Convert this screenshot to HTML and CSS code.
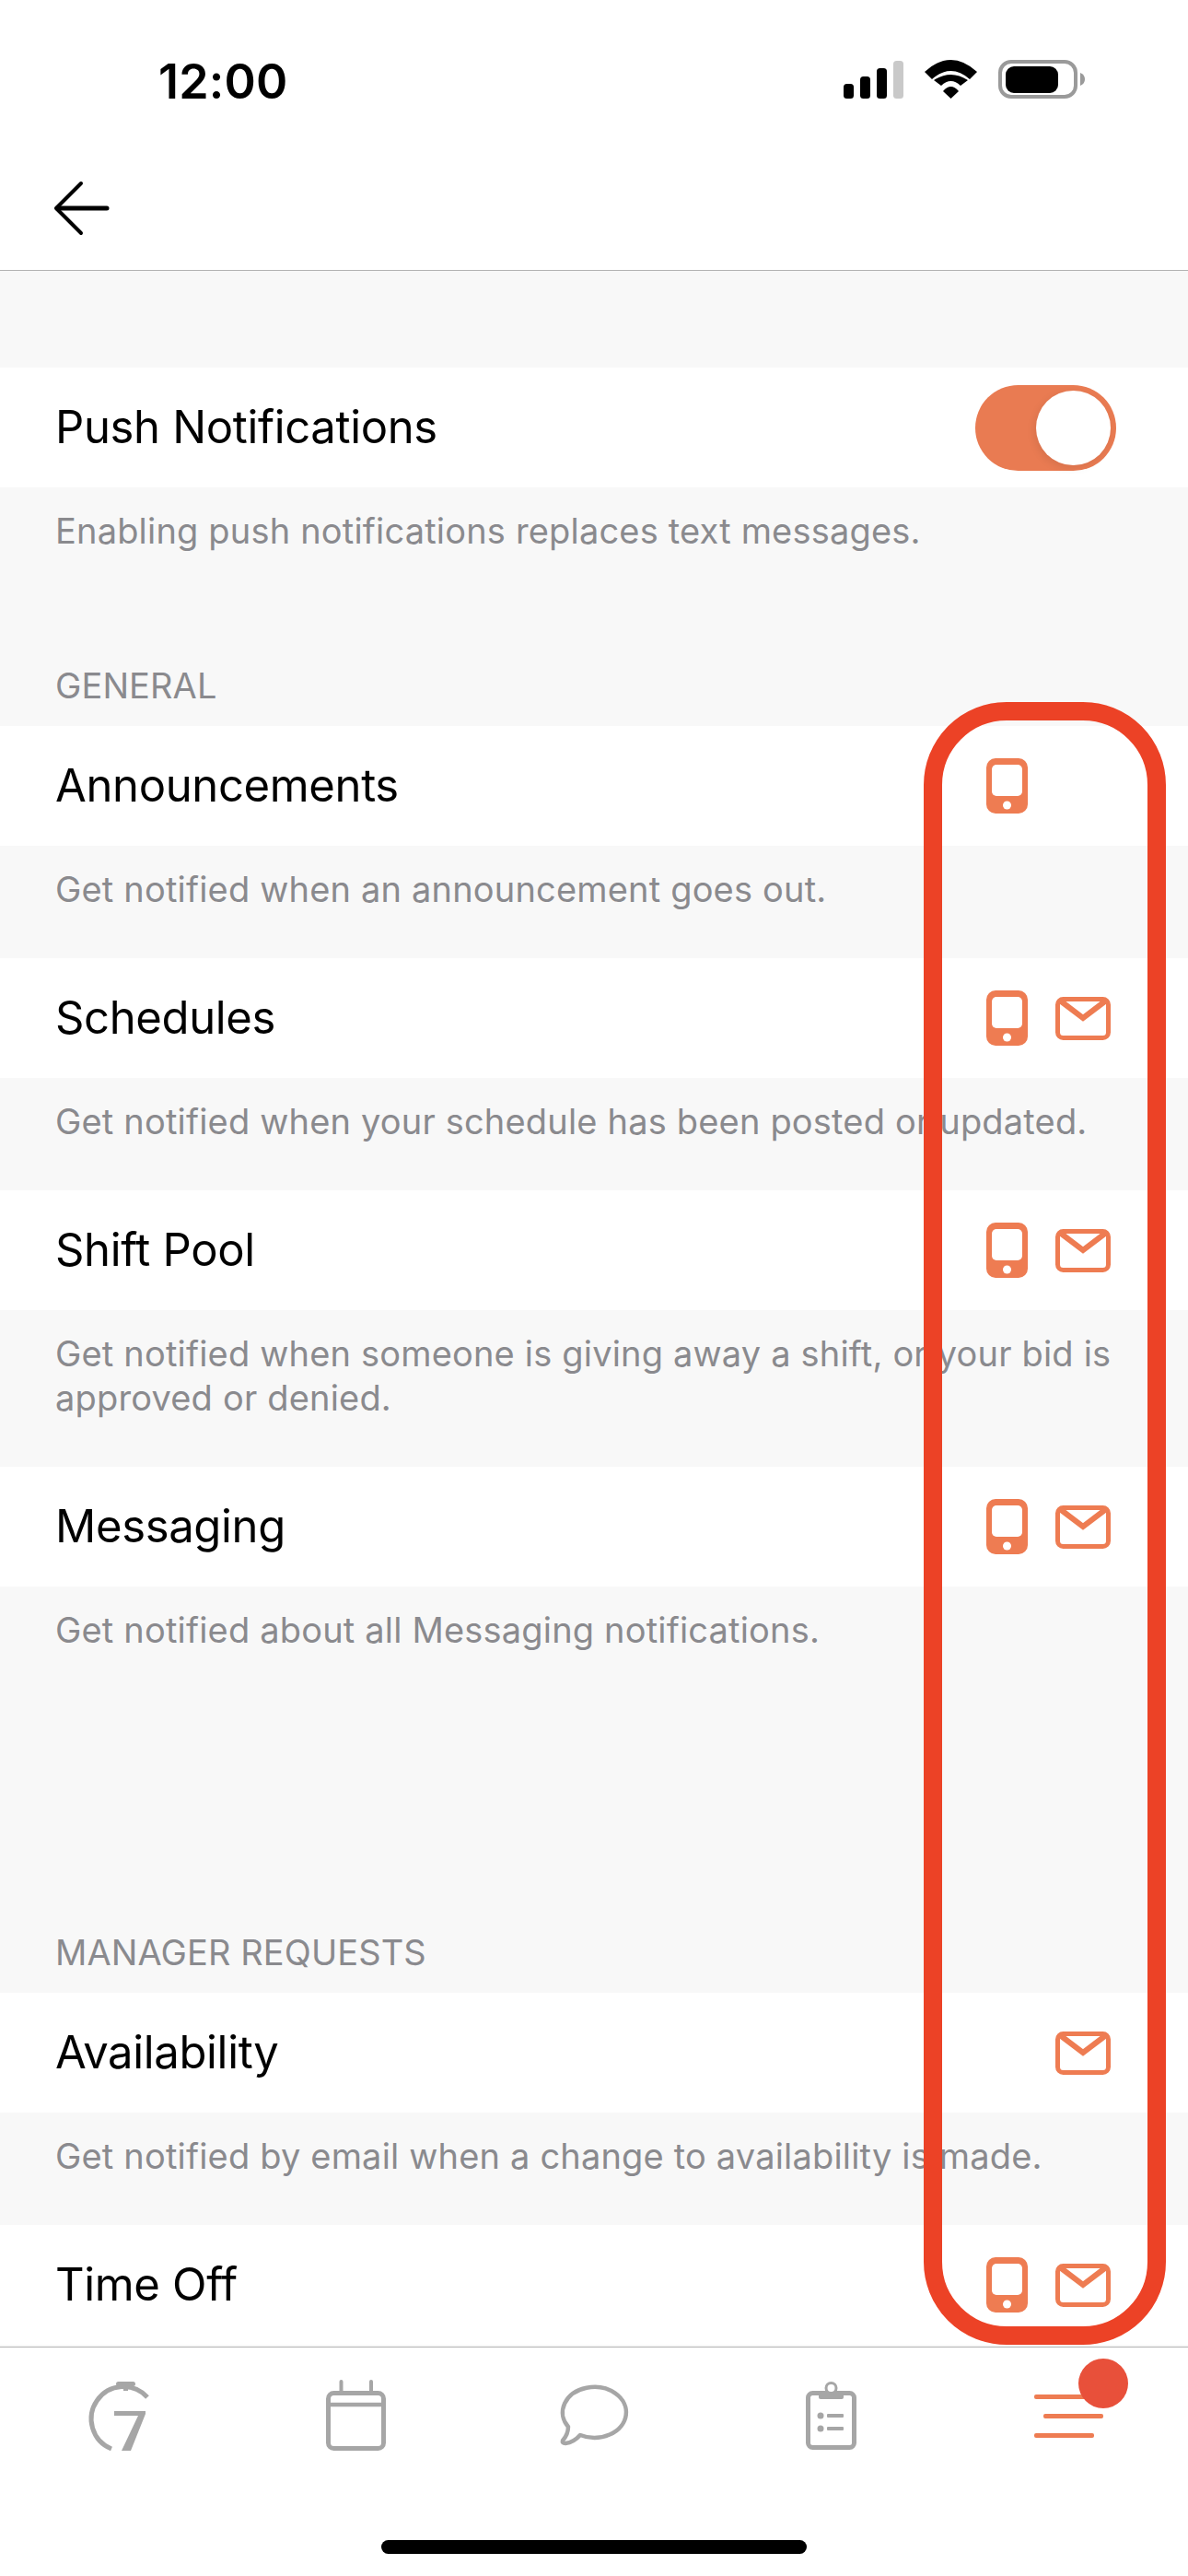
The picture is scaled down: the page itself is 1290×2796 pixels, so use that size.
FILE: index.html
```html
<!DOCTYPE html>
<html lang="en">
<head>
  <meta charset="UTF-8">
  <meta name="viewport" content="width=device-width, initial-scale=1.0">
  <title>Notification Settings</title>
  <link rel="stylesheet" href="styles.css">
</head>

<body>
  <svg class="defs" width="0" height="0">
    <symbol id="phone" viewBox="0 0 45 60">
      <rect width="45" height="60" rx="10" fill="#ee7c52"/>
      <rect x="6" y="7" width="33" height="34" rx="5" fill="#fff"/>
      <circle cx="22.5" cy="51" r="4.5" fill="#fff"/>
    </symbol>
    <symbol id="mail" viewBox="0 0 60 47">
      <rect x="2.5" y="2.5" width="55" height="42" rx="6" fill="none" stroke="#ee7c52" stroke-width="5"/>
      <path d="M5 4 L30 23 L55 4" fill="none" stroke="#ee7c52" stroke-width="6"/>
    </symbol>
  </svg>

  <div class="screen">
    <div class="header">
      <div class="status">
        <span class="time">12:00</span>
        <svg class="status-icons" width="262" height="44" viewBox="916 65 262 44">
          <rect x="916" y="91" width="11" height="16" rx="3.5"/>
          <rect x="934" y="83" width="11" height="24" rx="3.5"/>
          <rect x="952" y="74" width="11" height="33" rx="3.5"/>
          <rect x="970" y="66" width="11" height="41" rx="3.5" fill="#c9c9c9"/>
          <path d="M1004 78 Q1032.5 52 1061 78 L1053 86 Q1032.5 68 1012 86 Z"/>
          <path d="M1014 87 Q1032.5 75 1051 87 L1043 93 Q1032.5 83 1022 93 Z"/>
          <path d="M1024 99 Q1032.5 89 1041 99 L1032.5 107 Z"/>
          <rect x="1086" y="67" width="82" height="38" rx="12" fill="none" stroke="#9a9a9a" stroke-width="4"/>
          <rect x="1092" y="72" width="57" height="29" rx="9"/>
          <path d="M1173 79 Q1178 81 1178 86 Q1178 91 1173 93 Z" fill="#9a9a9a"/>
        </svg>
      </div>
      <div class="toolbar">
        <svg width="64" height="64" viewBox="0 0 64 64">
          <path d="M4 32 H58" fill="none" stroke="#000" stroke-width="5" stroke-linecap="round"/>
          <path d="M30 5 L3 32 L30 59" fill="none" stroke="#000" stroke-width="4" stroke-linecap="round" stroke-linejoin="round"/>
        </svg>
      </div>
    </div>

    <div class="content">
      <div class="row">
        <span class="row-title">Push Notifications</span>
        <div class="toggle"><div class="knob"></div></div>
      </div>
      <p class="desc">Enabling push notifications replaces text messages.</p>

      <div class="label">GENERAL</div>
      <div class="row">
        <span class="row-title">Announcements</span>
        <div class="icons">
          <svg class="ic-phone"><use href="#phone"/></svg>
        </div>
      </div>
      <p class="desc">Get notified when an announcement goes out.</p>

      <div class="row">
        <span class="row-title">Schedules</span>
        <div class="icons">
          <svg class="ic-phone"><use href="#phone"/></svg>
          <svg class="ic-mail"><use href="#mail"/></svg>
        </div>
      </div>
      <p class="desc">Get notified when your schedule has been posted or updated.</p>

      <div class="row">
        <span class="row-title">Shift Pool</span>
        <div class="icons">
          <svg class="ic-phone"><use href="#phone"/></svg>
          <svg class="ic-mail"><use href="#mail"/></svg>
        </div>
      </div>
      <p class="desc">Get notified when someone is giving away a shift, or your bid is approved or denied.</p>

      <div class="row">
        <span class="row-title">Messaging</span>
        <div class="icons">
          <svg class="ic-phone"><use href="#phone"/></svg>
          <svg class="ic-mail"><use href="#mail"/></svg>
        </div>
      </div>
      <p class="desc">Get notified about all Messaging notifications.</p>

      <div class="label label-far">MANAGER REQUESTS</div>
      <div class="row">
        <span class="row-title">Availability</span>
        <div class="icons">
          <svg class="ic-mail"><use href="#mail"/></svg>
        </div>
      </div>
      <p class="desc">Get notified by email when a change to availability is made.</p>

      <div class="row">
        <span class="row-title">Time Off</span>
        <div class="icons">
          <svg class="ic-phone"><use href="#phone"/></svg>
          <svg class="ic-mail"><use href="#mail"/></svg>
        </div>
      </div>
    </div>

    <div class="tabbar">
      <div class="tab">
        <svg class="tab-icon" viewBox="0 0 100 110">
          <path d="M81 46 A35 35 0 1 0 42 102" fill="none" stroke="#a6a6a6" stroke-width="5"/>
          <rect x="47" y="29" width="21" height="5" rx="2.5" fill="#a6a6a6"/>
          <rect x="55" y="33" width="5" height="6" fill="#a6a6a6"/>
          <polygon points="45,61 79,61 79,64 63,104 53,104 71,66 45,66" fill="#a6a6a6"/>
        </svg>
      </div>
      <div class="tab">
        <svg class="tab-icon" viewBox="0 0 100 110">
          <rect x="19.5" y="41.5" width="60" height="60" rx="6" fill="none" stroke="#a6a6a6" stroke-width="5"/>
          <path d="M19.5 54 H79.5" stroke="#a6a6a6" stroke-width="4.5"/>
          <path d="M33.5 29 V41 M66 29 V41" stroke="#a6a6a6" stroke-width="4" stroke-linecap="round"/>
        </svg>
      </div>
      <div class="tab">
        <svg class="tab-icon" viewBox="0 0 100 110">
          <path d="M35 87 A34.5 27.5 0 1 0 22 78 Q22 86 16 93 Q15 96 19 96 Q28 95 35 87 Z" fill="none" stroke="#a6a6a6" stroke-width="4.5" stroke-linejoin="round"/>
        </svg>
      </div>
      <div class="tab">
        <svg class="tab-icon" viewBox="0 0 100 110">
          <rect x="24.5" y="41.5" width="50" height="59" rx="5" fill="none" stroke="#a6a6a6" stroke-width="5"/>
          <rect x="36" y="41" width="27" height="7" rx="2" fill="#a6a6a6"/>
          <circle cx="49.5" cy="36" r="5.5" fill="#fff" stroke="#a6a6a6" stroke-width="3"/>
          <circle cx="38" cy="66" r="3.5" fill="#a6a6a6"/>
          <circle cx="38" cy="80" r="3.5" fill="#a6a6a6"/>
          <rect x="45" y="64" width="18" height="4" rx="1" fill="#a6a6a6"/>
          <rect x="45" y="78" width="18" height="4" rx="1" fill="#a6a6a6"/>
        </svg>
      </div>
      <div class="tab">
        <svg class="tab-icon" viewBox="0 0 100 110">
          <rect x="12" y="43" width="65" height="5" rx="2" fill="#ee7c52"/>
          <rect x="22" y="64" width="65" height="5" rx="2" fill="#ee7c52"/>
          <rect x="12" y="85" width="65" height="5" rx="2" fill="#ee7c52"/>
        </svg>
        <span class="badge"></span>
      </div>
    </div>

    <div class="home-bar"></div>

    <div class="frame"></div>
  </div>
</body>
</html>
```

FILE: styles.css
```css
body {
  margin: 0;
  padding: 0;
  background-color: #fff;
  color: #000;
  font-family: 'Inter', 'Liberation Sans', sans-serif;
}

.defs {
  position: absolute;
}

.screen {
  position: relative;
  width: 1290px;
  height: 2796px;
  overflow: hidden;
  display: flex;
  flex-direction: column;
}

.header {
  height: 293px;
  border-bottom: 1px solid #b3b3b3;
}

.status {
  display: flex;
  justify-content: space-between;
  align-items: flex-start;
  padding: 58px 112px 0 172px;
  height: 63px;
}

.time {
  font-size: 52px;
  line-height: 62px;
  font-weight: 600;
  letter-spacing: 0.2px;
}

.status-icons {
  margin-top: 7px;
}

.toolbar {
  padding: 73px 0 0 58px;
}

.toolbar svg {
  display: block;
}

.content {
  flex: 1;
  background-color: #f8f8f8;
  padding-top: 105px;
}

.row {
  height: 130px;
  display: flex;
  align-items: center;
  justify-content: space-between;
  padding: 0 84px 0 60px;
  background-color: #fff;
}

.row-title {
  font-size: 49px;
  letter-spacing: -0.35px;
  padding-bottom: 1px;
}

.desc {
  margin: 0;
  padding: 23px 60px 51px 60px;
  font-size: 38px;
  line-height: 48px;
  letter-spacing: 0.18px;
  color: #8a8a8e;
}

.label {
  padding: 69px 60px 20px 60px;
  font-size: 38px;
  line-height: 48px;
  letter-spacing: 0.1px;
  color: #8a8a8e;
}

.label-far {
  padding-top: 251px;
}

.icons {
  display: grid;
  grid-template-columns: 45px 60px;
  column-gap: 30px;
  align-items: center;
}

.ic-phone {
  grid-column: 1;
  width: 45px;
  height: 60px;
}

.ic-mail {
  grid-column: 2;
  width: 60px;
  height: 47px;
}

.toggle {
  width: 153px;
  height: 93px;
  margin-right: -6px;
  padding: 6px;
  box-sizing: border-box;
  border-radius: 47px;
  background-color: #e97b52;
  display: flex;
  justify-content: flex-end;
}

.knob {
  width: 81px;
  height: 81px;
  border-radius: 50%;
  background-color: #fff;
  box-shadow: -2px 3px 10px rgba(0, 0, 0, 0.08);
}

.tabbar {
  display: grid;
  grid-template-columns: repeat(5, 1fr);
  height: 249px;
  padding-top: 8px;
  box-sizing: border-box;
  border-top: 1px solid #b3b3b3;
  background-color: #fff;
}

.tab {
  position: relative;
  display: flex;
  justify-content: center;
  align-items: flex-start;
}

.tab-icon {
  width: 100px;
  height: 110px;
}

.badge {
  position: absolute;
  left: 139px;
  top: 4px;
  width: 54px;
  height: 54px;
  border-radius: 50%;
  background-color: #e8503a;
}

.home-bar {
  position: absolute;
  left: 414px;
  top: 2757px;
  width: 462px;
  height: 15px;
  border-radius: 8px;
  background-color: #000;
}

.frame {
  position: absolute;
  left: 1003px;
  top: 762px;
  width: 263px;
  height: 1783px;
  box-sizing: border-box;
  border: 20px solid #ec4226;
  border-radius: 90px;
}
```
